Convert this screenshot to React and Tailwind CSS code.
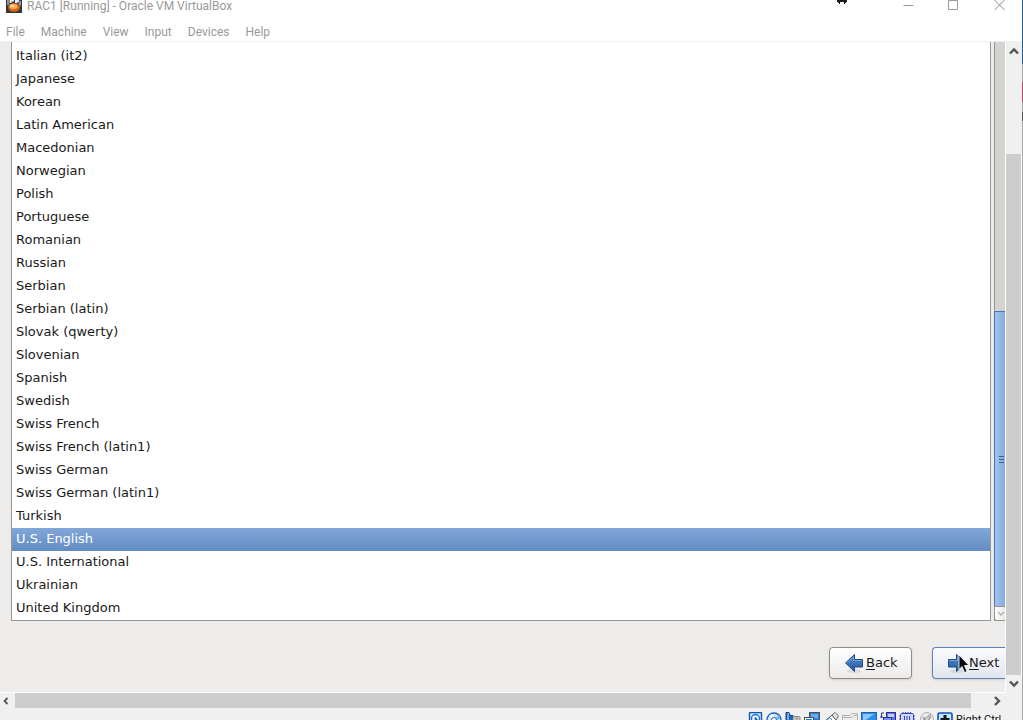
import { useState } from "react";

const MENUS = ["File", "Machine", "View", "Input", "Devices", "Help"];

const KEYBOARDS = [
  "Italian (it2)",
  "Japanese",
  "Korean",
  "Latin American",
  "Macedonian",
  "Norwegian",
  "Polish",
  "Portuguese",
  "Romanian",
  "Russian",
  "Serbian",
  "Serbian (latin)",
  "Slovak (qwerty)",
  "Slovenian",
  "Spanish",
  "Swedish",
  "Swiss French",
  "Swiss French (latin1)",
  "Swiss German",
  "Swiss German (latin1)",
  "Turkish",
  "U.S. English",
  "U.S. International",
  "Ukrainian",
  "United Kingdom",
];

// Drawings for the status bar, each on a 16x16 grid
const STATUS_ICONS = [
  {
    label: "Hard disks",
    art: (
      <>
        <rect x="2.5" y="0.5" width="12" height="15" rx="1" fill="#d9edff" stroke="#0b55b5" strokeWidth="1.4" />
        <circle cx="8.5" cy="6.5" r="4" fill="#fff" stroke="#1d6fc9" strokeWidth="1.4" />
        <path d="M8.5 6.5l3 3" stroke="#0b55b5" strokeWidth="1.5" />
        <circle cx="8.5" cy="6.5" r="1.2" fill="#1d6fc9" />
      </>
    ),
  },
  {
    label: "Optical drives",
    art: (
      <>
        <circle cx="8" cy="8" r="7" fill="#cfe6fb" stroke="#1763bd" strokeWidth="1.4" />
        <path d="M8 8L3 4a6 6 0 0 1 4-2z" fill="#fff" />
        <path d="M8 8l5-5a6 6 0 0 1 1 4z" fill="#69b4f2" />
        <circle cx="8" cy="8" r="2.5" fill="#fff" stroke="#1763bd" />
      </>
    ),
  },
  {
    label: "Audio",
    art: (
      <>
        <path d="M1 0.5h3l1 3h3v9H5l-4 3z" fill="#1f67ba" stroke="#123f7d" />
        <path d="M3 1v12" stroke="#8fc5f5" strokeWidth="1.5" />
        <rect x="8" y="4.5" width="7" height="7" rx="1" fill="#c8c8c8" stroke="#8b8b8b" />
        <path d="M12 5v6" stroke="#888" />
      </>
    ),
  },
  {
    label: "Network",
    art: (
      <>
        <rect x="5.5" y="0.5" width="10" height="8" fill="#2f7dd6" stroke="#505050" />
        <path d="M7 2h7v4H7z" fill="#65adf0" />
        <rect x="0.5" y="5.5" width="9" height="7" fill="#e8f4ff" stroke="#505050" />
        <path d="M2 7h6v4H2z" fill="#2f7dd6" />
      </>
    ),
  },
  {
    label: "USB",
    art: (
      <>
        <path d="M1.5 9.5L9 3l4 5-6 7H2z" fill="#fff" stroke="#555" />
        <path d="M9 3l3-2.5L15.5 4 13 8z" fill="#e3e3e3" stroke="#666" />
        <path d="M3 9l4-3.5 3 4" stroke="#3b83d2" fill="none" />
      </>
    ),
  },
  {
    label: "Shared folders",
    art: <path d="M0.5 14V3.5H8L10 1.5h5.5V14z M1 5.5h9l2-2h3" fill="#ededed" stroke="#b0b0b0" />,
  },
  {
    label: "Display",
    art: (
      <>
        <rect x="0.5" y="0.5" width="15" height="12" fill="#2f8ceb" stroke="#1861b5" />
        <path d="M2 2h11L2 10z" fill="#8dc9ff" />
      </>
    ),
  },
  {
    label: "Recording",
    art: (
      <>
        <rect x="6.5" y="0.5" width="9" height="8" fill="#5d78e0" stroke="#25309c" />
        <path d="M8 2h6v3H8z" fill="#c3ceff" />
        <path d="M4 1H1.5v5M0 5h3" stroke="#25309c" fill="none" />
        <rect x="3.5" y="5.5" width="8" height="8" fill="#7d94ee" stroke="#25309c" />
      </>
    ),
  },
  {
    label: "Processor features",
    art: (
      <>
        <path d="M4 0v16M6.5 0v16M9 0v16M11.5 0v16M0 4h16M0 7h16M0 10h16" stroke="#4050b8" strokeWidth="1.2" />
        <rect x="1.5" y="1.5" width="13" height="12" rx="1" fill="#cdd6ff" stroke="#3645b0" />
        <path d="M5.5 4v8M8 4v8M10.5 4v8" stroke="#3645b0" />
      </>
    ),
  },
  {
    label: "Mouse integration",
    art: (
      <>
        <circle cx="9" cy="7" r="6.5" fill="#ececec" stroke="#b0b0b0" />
        <path d="M1 12L13 2" stroke="#a6a6a6" strokeWidth="1.5" />
        <path d="M5 5l4 5 4-6" stroke="#9b9b9b" fill="none" strokeWidth="1.5" />
      </>
    ),
  },
  {
    label: "Keyboard capture",
    art: (
      <>
        <rect x="1" y="1" width="14" height="14" rx="1.5" fill="#c7e2fb" stroke="#0c56b3" strokeWidth="1.6" />
        <path d="M6.5 3h3v3h3v2L8 13 3.5 8V6h3z" fill="#101820" />
      </>
    ),
  },
];

function Chevron({ d }) {
  return (
    <svg className="h-4 w-4" viewBox="0 0 16 16" fill="none" stroke="#555555" strokeWidth="2.4">
      <path d={d} />
    </svg>
  );
}

function ArrowIcon({ flip }) {
  return (
    <svg className={`h-5 w-5 shrink-0 ${flip ? "-scale-x-100" : ""}`} viewBox="0 0 20 20">
      <defs>
        <linearGradient id={flip ? "arrowNext" : "arrowBack"} x1="0" y1="0" x2="0" y2="1">
          <stop offset="0" stopColor="#5a8dc9" />
          <stop offset="1" stopColor="#2159a3" />
        </linearGradient>
      </defs>
      <ellipse cx="10" cy="18" rx="7" ry="2" fill="#000" opacity="0.08" />
      <path
        d="M1.5 10L10.5 1.5V6.5H18.5V14H10.5V18.5Z"
        fill={flip ? "url(#arrowNext)" : "url(#arrowBack)"}
        stroke="#204a87"
        strokeLinejoin="round"
      />
      <path d="M3 10L9.5 4V7.5H17.5" fill="none" stroke="#8bb1dd" opacity="0.7" />
    </svg>
  );
}

function TitleBar() {
  return (
    <header className="flex h-[22px] shrink-0 items-start bg-white pl-[6px] text-xs text-[#999999]">
      <svg className="h-[13px] w-4 shrink-0" viewBox="0 0 16 13">
        <path d="M0 0h16v13H0z" fill="#33363f" />
        <path d="M1 0h3l-1 5H1zM12 1h3v5l-2-1z" fill="#8d95a3" />
        <path d="M4 0h4v1.5H5.5V3H4zM9 0h4v1.5h-1.5V3H9z" fill="#eef0f4" />
        <ellipse cx="8" cy="7.5" rx="6" ry="4.2" fill="#dd6410" />
        <ellipse cx="7.5" cy="6.5" rx="4" ry="2.4" fill="#ffae55" />
        <ellipse cx="6.5" cy="5.8" rx="2" ry="1" fill="#ffe0b0" />
      </svg>
      <h1 className="ml-[5px] flex-1 whitespace-nowrap leading-3">RAC1 [Running] - Oracle VM VirtualBox</h1>
      <button aria-label="Minimize" className="flex h-[11px] w-[45px] justify-center">
        <svg className="h-[11px] w-[11px]" viewBox="0 0 11 11" stroke="#999999">
          <path d="M0.5 5.5h10" />
        </svg>
      </button>
      <button aria-label="Maximize" className="flex h-[11px] w-[45px] justify-center">
        <svg className="h-[11px] w-[11px]" viewBox="0 0 11 11" fill="none" stroke="#999999">
          <path d="M0.5 0.5h9v9h-9z" />
        </svg>
      </button>
      <button aria-label="Close" className="flex h-[11px] w-[46px] justify-center">
        <svg className="h-[11px] w-[11px]" viewBox="0 0 11 11" stroke="#888888">
          <path d="M0.5 0l10 10M10.5 0l-10 10" />
        </svg>
      </button>
    </header>
  );
}

function GuestScrollbar() {
  return (
    <div className="ml-[3px] flex w-[11px] flex-col border-l border-[#96938f] bg-[#d4d3d1]">
      <div className="h-[269px]" />
      <div className="-ml-px flex flex-1 items-center justify-end border-l border-t border-[#4a74ad] bg-linear-to-r from-[#a5c3ea] to-[#86abdf] pr-px">
        <div className="flex w-[5px] flex-col gap-[2px]">
          <span className="h-px bg-[#3d6499]" />
          <span className="h-px bg-[#3d6499]" />
          <span className="h-px bg-[#3d6499]" />
        </div>
      </div>
      <button
        aria-label="Scroll list down"
        className="-ml-px flex h-[15px] items-center justify-end rounded-bl-[3px] border border-r-0 border-[#96938f] bg-linear-to-r from-white to-[#e8e7e5]"
      >
        <svg className="h-2 w-2" viewBox="0 0 8 8" fill="none" stroke="#b5b3b0" strokeWidth="1.5">
          <path d="M1 2l3 3 3-3" />
        </svg>
      </button>
    </div>
  );
}

function KeyboardStep() {
  const [selected, setSelected] = useState("U.S. English");

  return (
    <main className="flex min-w-0 flex-1 flex-col border-b border-white bg-[#edeceb] pl-[11px] font-['DejaVu_Sans',sans-serif] text-[13px] text-[#1a1a1a]">
      <div className="flex">
        <ul role="listbox" aria-label="Keyboard" className="flex-1 border border-t-0 border-[#9a9692] bg-white pt-[3px]">
          {KEYBOARDS.map((name) => (
            <li
              key={name}
              role="option"
              aria-selected={name === selected}
              onClick={() => setSelected(name)}
              className={`h-[23px] pl-1 leading-[22px] ${
                name === selected ? "bg-linear-to-b from-[#82a6d8] to-[#638dc3] text-white" : ""
              }`}
            >
              {name}
            </li>
          ))}
        </ul>
        <GuestScrollbar />
      </div>

      <div className="flex h-[71px] justify-end gap-5 pt-[26px]">
        <button className="flex h-8 w-[83px] items-center rounded-[4px] border border-[#8f8c88] bg-linear-to-b from-white to-[#ecebea] pl-[14px] shadow-sm">
          <ArrowIcon />
          <span className="ml-[2px]">
            <u className="underline-offset-2">B</u>ack
          </span>
        </button>
        <button className="relative flex h-8 w-[73px] items-center rounded-l-[4px] border border-r-0 border-[#5b82b5] bg-linear-to-b from-[#fbfcfe] to-[#e0e5ee] pl-[14px] shadow-sm">
          <ArrowIcon flip />
          <span className="ml-[2px]">
            <u className="underline-offset-2">N</u>ext
          </span>
          <svg className="absolute left-[25px] top-[6px] h-5 w-3" viewBox="0 0 12 20">
            <path
              d="M1 1V15.5L4 12.5L6.5 18.5L9 17.5L6.5 11.5H11Z"
              fill="#0a0a0a"
              stroke="#ffffff"
              strokeWidth="0.8"
            />
          </svg>
        </button>
      </div>
    </main>
  );
}

export default function App() {
  return (
    <div className="flex h-screen overflow-hidden bg-[#f0f0f0]">
      <div className="flex min-w-0 flex-1 flex-col font-[Roboto,'Open_Sans',sans-serif]">
        <TitleBar />

        <nav className="flex h-5 shrink-0 items-center gap-4 border-b border-[#f0f0f0] bg-white pl-[6px] text-xs text-[#999999]">
          {MENUS.map((menu) => (
            <button key={menu} className="leading-4">
              {menu}
            </button>
          ))}
        </nav>

        <div className="flex shrink-0">
          <KeyboardStep />
          <div className="flex w-[17px] shrink-0 flex-col items-center border-l border-white">
            <button aria-label="Scroll up" className="flex h-4 items-center pt-px">
              <Chevron d="M4 10.5L8 6.5L12 10.5" />
            </button>
            <div className="flex w-full flex-1 flex-col pt-[96px]">
              <div className="flex-1 border-r border-white bg-[#cdcdcd]" />
            </div>
            <button aria-label="Scroll down" className="flex h-[18px] items-center">
              <Chevron d="M4 5.5L8 9.5L12 5.5" />
            </button>
          </div>
        </div>

        <div className="flex h-[15px] shrink-0 items-center pr-[17px]">
          <button aria-label="Scroll left" className="flex w-[15px] justify-center pr-[3px]">
            <Chevron d="M10 4L6 8L10 12" />
          </button>
          <div className="h-full flex-1 bg-[#cdcdcd]" />
          <button aria-label="Scroll right" className="flex w-[34px] justify-end">
            <Chevron d="M6 4L10 8L6 12" />
          </button>
        </div>

        <footer className="flex shrink-0 justify-end gap-[3px] pr-[21px] pt-1 text-[11px] text-[#111111]">
          {STATUS_ICONS.map((icon) => (
            <svg key={icon.label} role="img" aria-label={icon.label} className="h-4 w-4 shrink-0" viewBox="0 0 16 16" fill="none">
              {icon.art}
            </svg>
          ))}
          <span className="w-[45px] whitespace-nowrap leading-4">Right Ctrl</span>
        </footer>
      </div>

      {/* Sliver of the window behind */}
      <div className="flex w-px flex-col bg-[#a8a8a8]">
        <div className="h-16 bg-[#2f5a87]" />
        <div className="mt-[18px] h-5 bg-[#a34a6e]" />
        <div className="mt-[10px] h-[9px] bg-[#555555]" />
      </div>

      {/* Resize pointer over the title bar */}
      <svg className="absolute left-[836px] top-0 h-1 w-3" viewBox="0 0 12 4">
        <path d="M1 0h10v2h-1v1H9v1H8V2H4v2H3V3H2V2H1z" fill="#1c1c1c" />
      </svg>
    </div>
  );
}
